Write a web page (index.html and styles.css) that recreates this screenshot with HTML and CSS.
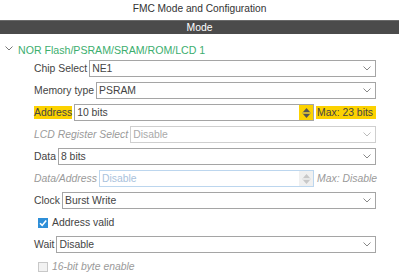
FILE: index.html
```html
<!DOCTYPE html>
<html>
<head>
<meta charset="utf-8">
<link rel="stylesheet" href="styles.css">
</head>
<body>
<div class="title">FMC Mode and Configuration</div>
<div class="modebar">Mode</div>
<div class="tree">
  <svg class="tree-chev" width="8" height="5" viewBox="0 0 8 5"><path d="M0.5 0.5 L4 4 L7.5 0.5" fill="none" stroke="#777" stroke-width="1"/></svg>
  <span class="tree-text">NOR Flash/PSRAM/SRAM/ROM/LCD 1</span>
</div>
<div class="form">
  <div class="row">
    <span class="label">Chip Select</span>
    <div class="select"><span class="val">NE1</span><svg class="chev" width="8" height="5" viewBox="0 0 8 5"><path d="M0.5 0.5 L4 4 L7.5 0.5" fill="none" stroke="#888" stroke-width="1"/></svg></div>
  </div>
  <div class="row">
    <span class="label">Memory type</span>
    <div class="select"><span class="val">PSRAM</span><svg class="chev" width="8" height="5" viewBox="0 0 8 5"><path d="M0.5 0.5 L4 4 L7.5 0.5" fill="none" stroke="#888" stroke-width="1"/></svg></div>
  </div>
  <div class="row">
    <span class="label hl">Address</span>
    <div class="spin"><span class="val">10 bits</span>
      <div class="spinbtn hlbtn"><svg width="9" height="12" viewBox="0 0 9 12"><path d="M1 5 L4.5 1 L8 5 Z" fill="#555"/><path d="M0 6 H9" stroke="#888" stroke-width="0.8"/><path d="M1 7 L4.5 11 L8 7 Z" fill="#555"/></svg></div>
    </div>
    <span class="max hl">Max: 23 bits</span>
  </div>
  <div class="row">
    <span class="label dis">LCD Register Select</span>
    <div class="select disabled"><span class="val">Disable</span><svg class="chev" width="8" height="5" viewBox="0 0 8 5"><path d="M0.5 0.5 L4 4 L7.5 0.5" fill="none" stroke="#bbb" stroke-width="1"/></svg></div>
  </div>
  <div class="row">
    <span class="label">Data</span>
    <div class="select"><span class="val">8 bits</span><svg class="chev" width="8" height="5" viewBox="0 0 8 5"><path d="M0.5 0.5 L4 4 L7.5 0.5" fill="none" stroke="#888" stroke-width="1"/></svg></div>
  </div>
  <div class="row">
    <span class="label dis">Data/Address</span>
    <div class="spin spin-dis"><span class="val">Disable</span>
      <div class="spinbtn grey"><svg width="9" height="12" viewBox="0 0 9 12"><path d="M1 5 L4.5 1 L8 5 Z" fill="#c8c8c8"/><path d="M0 6 H9" stroke="#d8d8d8" stroke-width="0.8"/><path d="M1 7 L4.5 11 L8 7 Z" fill="#c8c8c8"/></svg></div>
    </div>
    <span class="max dis">Max: Disable</span>
  </div>
  <div class="row">
    <span class="label">Clock</span>
    <div class="select"><span class="val">Burst Write</span><svg class="chev" width="8" height="5" viewBox="0 0 8 5"><path d="M0.5 0.5 L4 4 L7.5 0.5" fill="none" stroke="#888" stroke-width="1"/></svg></div>
  </div>
  <div class="row checkrow">
    <span class="cb checked"><svg width="10" height="10" viewBox="0 0 10 10"><path d="M2 5.2 L4.2 7.4 L8.2 2.6" fill="none" stroke="#fff" stroke-width="1.6"/></svg></span>
    <span class="cblabel">Address valid</span>
  </div>
  <div class="row">
    <span class="label">Wait</span>
    <div class="select"><span class="val">Disable</span><svg class="chev" width="8" height="5" viewBox="0 0 8 5"><path d="M0.5 0.5 L4 4 L7.5 0.5" fill="none" stroke="#888" stroke-width="1"/></svg></div>
  </div>
  <div class="row checkrow">
    <span class="cb cbdis"></span>
    <span class="cblabel dis">16-bit byte enable</span>
  </div>
</div>
</body>
</html>
```
FILE: styles.css
```css
html, body {
  margin: 0;
  padding: 0;
  background: #fff;
}
body {
  font-family: "Liberation Sans", Arial, sans-serif;
  font-size: 10.4px;
  color: #444;
  width: 399px;
  height: 279px;
  overflow: hidden;
}
.title {
  height: 20px;
  line-height: 17px;
  text-align: center;
  font-size: 10.2px;
  color: #333;
}
.modebar {
  height: 13px;
  line-height: 13px;
  background: #4b4b4b;
  border-top: 1px solid #6a6a6a;
  color: #fff;
  text-align: center;
  font-size: 10.4px;
}
.tree {
  display: flex;
  align-items: center;
  height: 16px;
  margin-top: 8px;
  padding-left: 5px;
}
.tree-chev {
  margin-right: 5px;
  margin-top: -3px;
}
.tree-text {
  color: #3cae6e;
  font-size: 10.6px;
}
.form {
  display: flex;
  flex-direction: column;
  gap: 5px;
  padding: 2px 23px 0 34px;
}
.row {
  display: flex;
  align-items: center;
  height: 17px;
}
.label {
  margin-right: 2px;
  white-space: nowrap;
  line-height: 13px;
}
.dis {
  color: #9a9a9a;
  font-style: italic;
}
.hl {
  background: #fcd200;
}
.select {
  flex: 1;
  height: 17px;
  box-sizing: border-box;
  border: 1px solid #a5a5a5;
  display: flex;
  align-items: center;
  justify-content: space-between;
  padding: 0 4px 0 2px;
  background: #fff;
}
.select.disabled {
  border-color: #cfcfcf;
}
.select.disabled .val {
  color: #aaa;
}
.val {
  white-space: nowrap;
}
.chev {
  display: block;
}
.spin {
  flex: 1;
  height: 17px;
  box-sizing: border-box;
  border: 1px solid #a5a5a5;
  display: flex;
  align-items: center;
  justify-content: space-between;
  padding-left: 2px;
  background: #fff;
}
.spin-dis {
  border-color: #bcd6ee;
}
.spin-dis .val {
  color: #a9c2dc;
}
.spinbtn {
  width: 14px;
  height: 15px;
  display: flex;
  align-items: center;
  justify-content: center;
}
.hlbtn {
  background: #fcd200;
}
.grey {
  background: #f0f0f0;
}
.max {
  margin-left: 2px;
  width: 60px;
  padding-left: 1px;
  box-sizing: border-box;
  line-height: 13px;
  white-space: nowrap;
}
.checkrow {
  padding-left: 4px;
}
.cb {
  width: 10px;
  height: 10px;
  box-sizing: border-box;
  display: flex;
  align-items: center;
  justify-content: center;
  margin-right: 4px;
}
.cb.checked {
  background: #2f8fd8;
}
.cb svg {
  display: block;
}
.cbdis {
  border: 1px solid #c8c8c8;
  background: #f2f2f2;
}
.cblabel {
  white-space: nowrap;
}
```
